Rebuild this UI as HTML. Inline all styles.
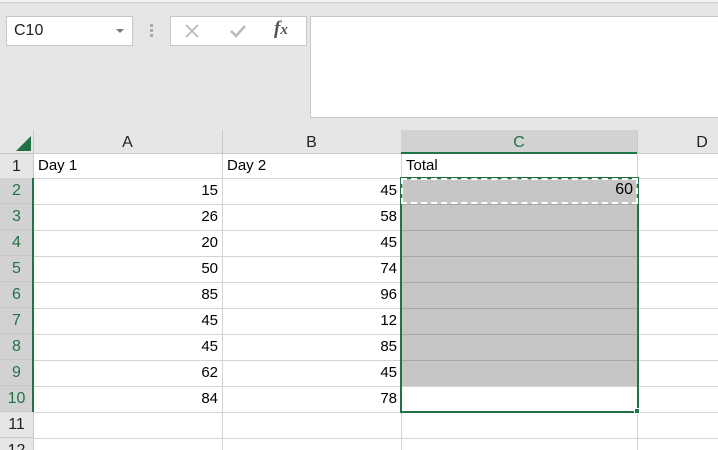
<!DOCTYPE html>
<html><head><style>
*{margin:0;padding:0;box-sizing:border-box}
html,body{width:718px;height:450px;overflow:hidden}
body{background:#e6e6e6;font-family:"Liberation Sans",Calibri,sans-serif;position:relative}
.a{position:absolute}
.cell{position:absolute;font-size:15px;color:#000;line-height:26px;white-space:nowrap}
.rh{position:absolute;left:0;width:33px;height:26px;text-align:center;font-size:16px;line-height:26px;color:#222;background:#e6e6e6;border-bottom:1px solid #c8c8c8}
.rh.s{background:#d2d2d2;color:#217346}
</style></head><body>
<div class="a" style="left:0;top:0;width:718px;height:3px;background:#f3f3f3;border-bottom:1px solid #d0d0d0"></div>
<div class="a" style="left:6px;top:16px;width:127px;height:30px;background:#fff;border:1px solid #c6c6c6;font-size:16px;line-height:28px;padding-left:7px;color:#222">C10</div>
<div class="a" style="left:116px;top:29px;width:0;height:0;border-left:4px solid transparent;border-right:4px solid transparent;border-top:4px solid #777"></div>
<div class="a" style="left:150px;top:24px;width:3px;height:3px;background:#aaa;box-shadow:0 5px 0 #aaa,0 10px 0 #aaa"></div>
<div class="a" style="left:170px;top:16px;width:137px;height:30px;background:#fff;border:1px solid #c6c6c6"></div>
<svg class="a" style="left:183px;top:22px" width="18" height="18"><path d="M3 3L15 15M15 3L3 15" stroke="#bbb" stroke-width="1.8"/></svg>
<svg class="a" style="left:228px;top:22px" width="20" height="18"><path d="M3 9L8 14L17 4" stroke="#bbb" stroke-width="2.5" fill="none"/></svg>
<div class="a" style="left:274px;top:18px;font-family:'Liberation Serif',serif;font-style:italic;font-weight:bold;font-size:19px;color:#555">f<span style="font-size:15px">x</span></div>
<div class="a" style="left:310px;top:16px;width:410px;height:102px;background:#fff;border:1px solid #c6c6c6"></div>
<div class="a" style="left:0;top:130px;width:718px;height:24px;background:#e6e6e6;border-bottom:1px solid #c8c8c8"></div>
<svg class="a" style="left:14px;top:134px" width="18" height="18"><path d="M17 2L17 17L2 17Z" fill="#217346"/></svg>
<div class="a" style="left:33px;top:130px;width:1px;height:24px;background:#c8c8c8"></div>
<div class="a" style="left:222px;top:130px;width:1px;height:24px;background:#c8c8c8"></div>
<div class="a" style="left:401px;top:130px;width:236px;height:24px;background:#d2d2d2;border-bottom:2px solid #217346"></div>
<div class="a" style="left:637px;top:130px;width:1px;height:24px;background:#c8c8c8"></div>
<div class="a" style="left:33px;top:130px;width:189px;text-align:center;font-size:16px;line-height:25px;color:#222">A</div>
<div class="a" style="left:222px;top:130px;width:179px;text-align:center;font-size:16px;line-height:25px;color:#222">B</div>
<div class="a" style="left:401px;top:130px;width:236px;text-align:center;font-size:16px;line-height:25px;color:#217346">C</div>
<div class="a" style="left:637px;top:130px;width:130px;text-align:center;font-size:16px;line-height:25px;color:#222">D</div>
<div class="a" style="left:33px;top:154px;width:685px;height:296px;background:#fff;
background-image:linear-gradient(#d4d4d4 1px,transparent 1px);background-size:100% 26px;background-position:0 24px"></div>
<div class="a" style="left:222px;top:154px;width:1px;height:296px;background:#d4d4d4"></div>
<div class="a" style="left:401px;top:154px;width:1px;height:296px;background:#d4d4d4"></div>
<div class="a" style="left:637px;top:154px;width:1px;height:296px;background:#d4d4d4"></div>
<div class="a" style="left:401px;top:178px;width:236px;height:208px;background:#c6c6c6;
background-image:linear-gradient(#a8a8a8 1px,transparent 1px);background-size:100% 26px;background-position:0 0"></div>
<div class="rh" style="top:154px">1</div>
<div class="rh s" style="top:178px">2</div>
<div class="rh s" style="top:204px">3</div>
<div class="rh s" style="top:230px">4</div>
<div class="rh s" style="top:256px">5</div>
<div class="rh s" style="top:282px">6</div>
<div class="rh s" style="top:308px">7</div>
<div class="rh s" style="top:334px">8</div>
<div class="rh s" style="top:360px">9</div>
<div class="rh s" style="top:386px">10</div>
<div class="rh" style="top:412px">11</div>
<div class="rh" style="top:438px">12</div>
<div class="a" style="left:33px;top:154px;width:1px;height:296px;background:#c8c8c8"></div>
<div class="a" style="left:32px;top:178px;width:2px;height:234px;background:#217346"></div>
<div class="cell" style="left:38px;top:153px">Day 1</div>
<div class="cell" style="left:227px;top:153px">Day 2</div>
<div class="cell" style="left:406px;top:153px">Total</div>
<div class="a" style="left:33px;top:178px;width:185px;text-align:right;font-size:15px;line-height:26px">15<br>26<br>20<br>50<br>85<br>45<br>45<br>62<br>84</div>
<div class="a" style="left:222px;top:178px;width:175px;text-align:right;font-size:15px;line-height:26px">45<br>58<br>45<br>74<br>96<br>12<br>85<br>45<br>78</div>
<div class="cell" style="left:401px;top:177px;width:232px;text-align:right;font-size:16px">60</div>
<div class="a" style="left:400px;top:177px;width:239px;height:236px;border:2px solid #217346"></div>
<div class="a" style="left:634px;top:408px;width:6px;height:6px;background:#217346;border:1px solid #fff"></div>
<div class="a" style="left:401px;top:178px;width:237px;height:26px;border:2px dashed #fff"></div>
</body></html>
